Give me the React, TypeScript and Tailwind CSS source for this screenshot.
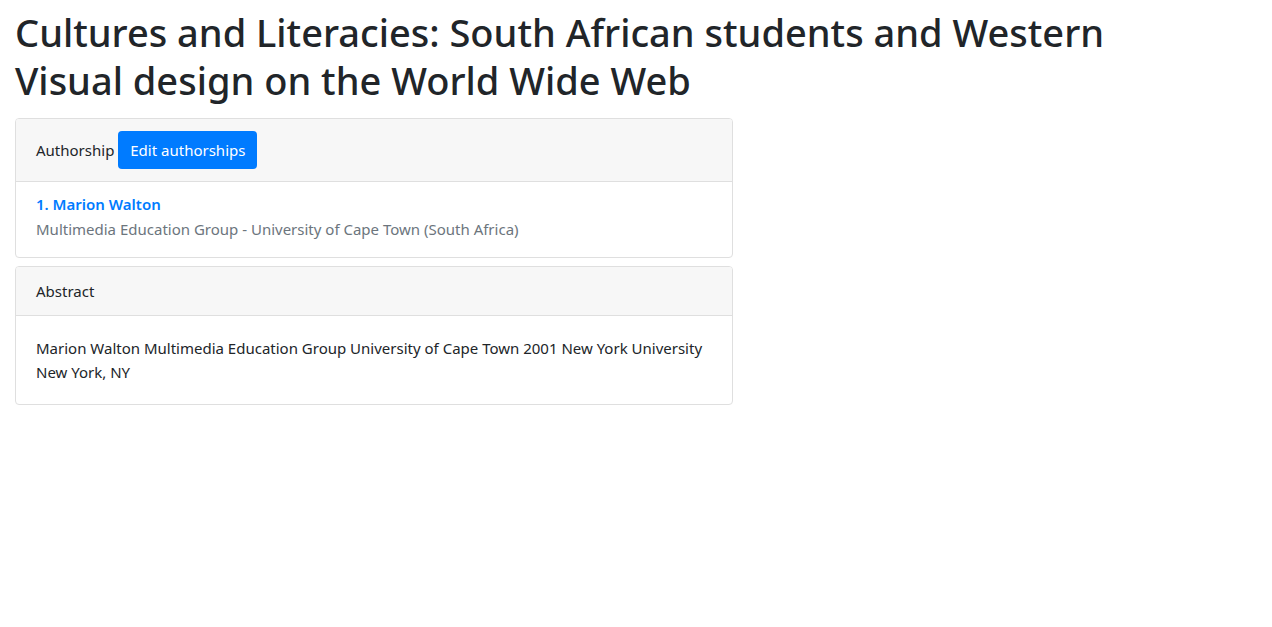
import React from 'react';

const font = { fontFamily: '"Noto Sans", "Open Sans", sans-serif' };

const Card: React.FC<{ header: React.ReactNode; children: React.ReactNode; bodyClass: string }> = ({ header, children, bodyClass }) => (
  <div className="mb-2 rounded-[4px] border border-[#dfdfdf] bg-white">
    <div className="border-b border-[#dfdfdf] bg-[#f7f7f7] px-5 py-3 rounded-t-[3px]">{header}</div>
    <div className={bodyClass}>{children}</div>
  </div>
);

export default function App() {
  return (
    <div className="min-h-screen bg-white px-[15px] text-[15px] leading-6 text-[#212529]" style={font}>
      <h1 className="mb-[14px] w-[1110px] pt-[8px] text-[38px] font-medium leading-[48px] text-[#212529]">
        Cultures and Literacies: South African students and Western Visual design on the World Wide Web
      </h1>

      <div className="w-[718px]">
        <Card
          bodyClass="px-5 pt-[10px] pb-[16px]"
          header={
            <div>
              Authorship{' '}
              <button className="rounded-[4px] bg-[#007bff] px-3 py-[7px] leading-6 text-white">
                Edit authorships
              </button>
            </div>
          }
        >
          <div className="font-semibold leading-[25px] text-[#007bff]">1. Marion Walton</div>
          <div className="text-[#6c757d]">Multimedia Education Group - University of Cape Town (South Africa)</div>
        </Card>

        <Card bodyClass="p-5" header={<div>Abstract</div>}>
          <p>
            Marion Walton Multimedia Education Group University of Cape Town 2001 New York University New York, NY
          </p>
        </Card>
      </div>
    </div>
  );
}
